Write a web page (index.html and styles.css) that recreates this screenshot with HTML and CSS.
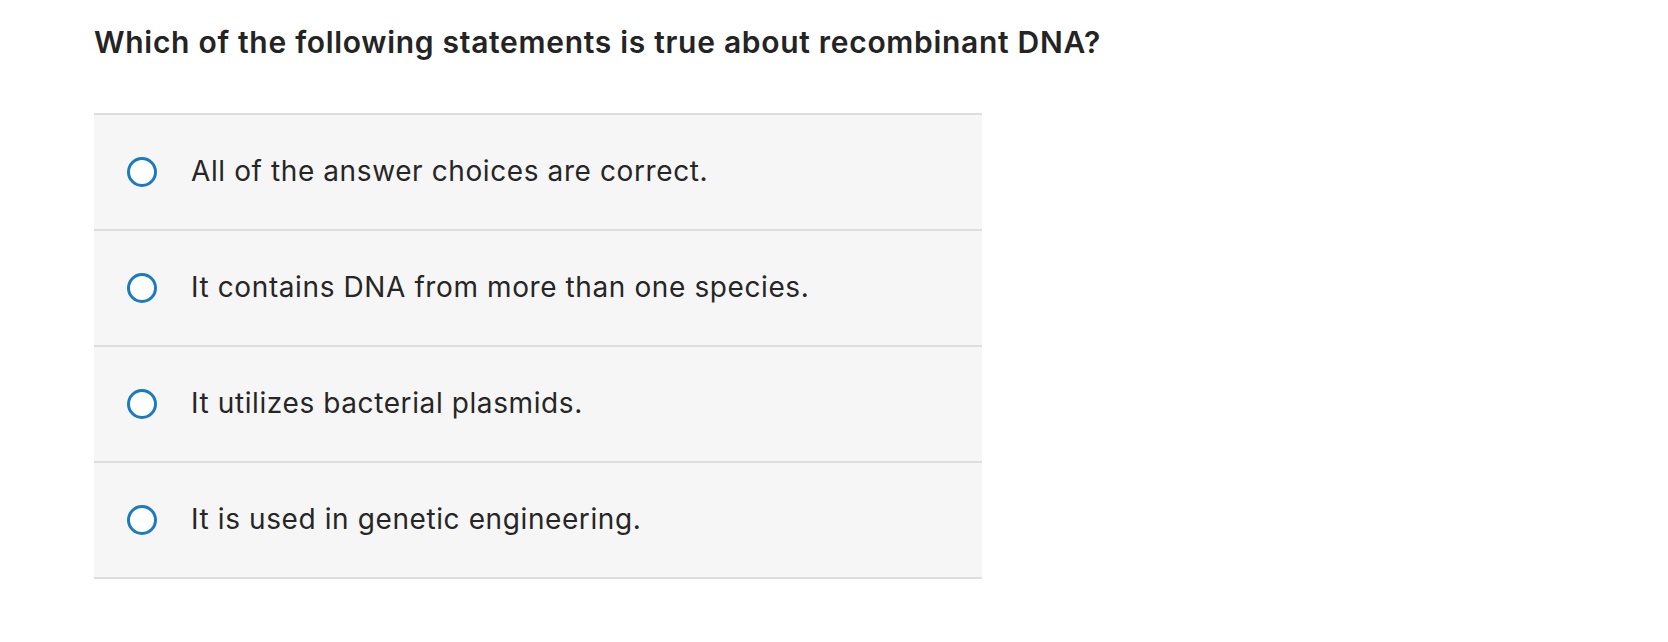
FILE: index.html
```html
<!DOCTYPE html>
<html lang="en">
<head>
<meta charset="utf-8">
<title>Question</title>
<link rel="stylesheet" href="styles.css">
</head>
<body>
<div class="page">
  <h1 class="question">Which of the following statements is true about recombinant DNA?</h1>
  <ul class="choices">
    <li class="choice"><span class="radio"></span><span class="label">All of the answer choices are correct.</span></li>
    <li class="choice"><span class="radio"></span><span class="label">It contains DNA from more than one species.</span></li>
    <li class="choice"><span class="radio"></span><span class="label">It utilizes bacterial plasmids.</span></li>
    <li class="choice"><span class="radio"></span><span class="label">It is used in genetic engineering.</span></li>
  </ul>
</div>
</body>
</html>
```
FILE: styles.css
```css
html, body {
  margin: 0;
  padding: 0;
  background: #ffffff;
}
.page {
  padding: 22px 0 0 94px;
  font-family: Inter, "Liberation Sans", Arial, sans-serif;
  color: #222222;
}
.question {
  margin: 0;
  font-size: 30px;
  font-weight: 600;
  line-height: 40px;
  letter-spacing: 0.7px;
  color: #242424;
}
.choices {
  list-style: none;
  margin: 51px 0 0 0;
  padding: 0;
  width: 888px;
  border-top: 2px solid #dedede;
}
.choice {
  display: flex;
  align-items: center;
  height: 114px;
  background: #f6f6f6;
  border-bottom: 2px solid #dedede;
  padding-left: 33px;
}
.radio {
  box-sizing: border-box;
  width: 30px;
  height: 30px;
  border: 3px solid #1b7ac0;
  border-radius: 50%;
  background: #ffffff;
  flex: none;
}
.label {
  margin-left: 34px;
  font-size: 28px;
  letter-spacing: 0.6px;
  color: #262626;
  position: relative;
  top: -1px;
}
```
